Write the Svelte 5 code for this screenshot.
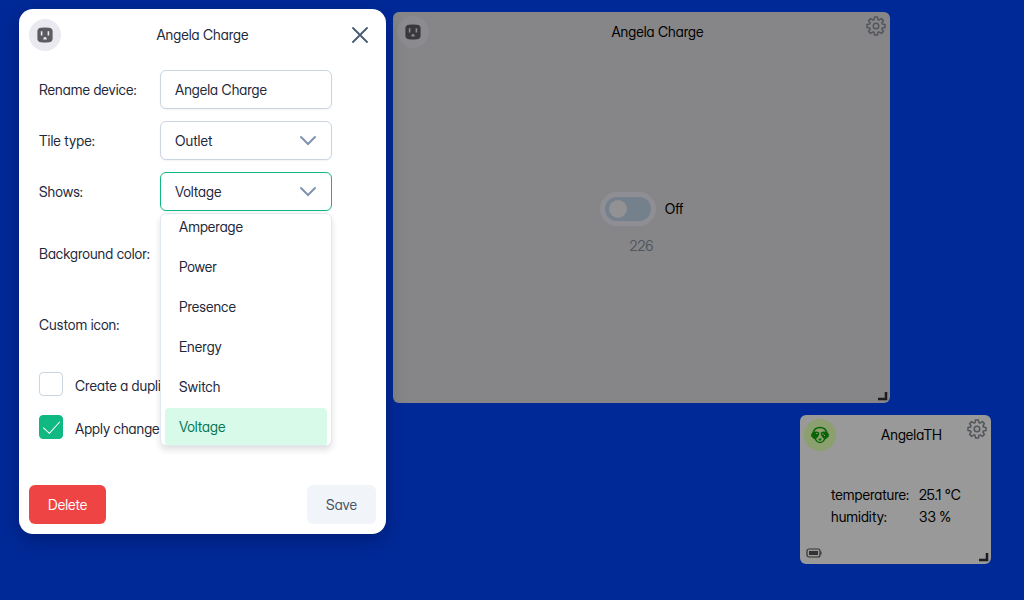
<script>
    let name = $state("Angela Charge");
    let tileType = $state("Outlet");
    let shows = $state("Voltage");
    let duplicate = $state(false);
    let applyAll = $state(true);

    const tileTypes = ["Outlet", "Switch", "Sensor"];
    const options = ["Amperage", "Power", "Presence", "Energy", "Switch", "Voltage"];
    const readings = [
        { label: "temperature:", value: "25.1 °C" },
        { label: "humidity:", value: "33 %" },
    ];
</script>

{#snippet outlet()}
    <svg width="16" height="16" viewBox="0 0 16 16" aria-hidden="true">
        <path fill="currentColor" d="M4 .8Q8 .3 12 .8Q15.4 1 15.6 4V12Q15.4 15 12 15.2Q8 15.7 4 15.2Q.6 15 .4 12V4Q.6 1 4 .8Z" />
        <path class="holes" d="M3.8 4.3h1.6v4.2H3.8zM10.6 4.3h1.6v4.2h-1.6zM6.3 12.5v-.8a1.7 1.7 0 0 1 3.4 0v.8z" />
    </svg>
{/snippet}

{#snippet gear()}
    <svg width="20" height="20" viewBox="0 0 20 20" fill="none" stroke="currentColor" stroke-width="1.5" stroke-linejoin="round" aria-hidden="true">
        <path d="M8 3.7 8.6 1h2.8l.6 2.7 1 .4 2.4-1.500 2 2-1.500 2.400.4 1 2.700.6v2.800l-2.700.6-.4 1 1.500 2.400-2 2-2.400-1.500-1 .4-.6 2.700H8.600L8 16.300l-1-.4-2.400 1.500-2-2L4.100 13l-.4-1L1 11.400V8.600L3.700 8l.4-1-1.500-2.400 2-2L7 4.100z" />
        <circle cx="10" cy="10" r="2.8" />
    </svg>
{/snippet}

{#snippet corner()}
    <svg class="corner" width="10" height="10" viewBox="0 0 10 10" aria-hidden="true">
        <path d="M8 1v7H0" fill="none" stroke="#1d1d1f" stroke-width="2.5" />
    </svg>
{/snippet}

{#snippet chevron()}
    <svg class="chevron" width="18" height="12" viewBox="0 0 18 12" aria-hidden="true">
        <path d="M2 2l7 7 7-7" fill="none" stroke="#8094ae" stroke-width="2" stroke-linecap="round" />
    </svg>
{/snippet}

<main class="dashboard">
    <section class="tile charge">
        <span class="badge">{@render outlet()}</span>
        <h2>{name}</h2>
        <button class="settings" aria-label="Settings for Angela Charge">{@render gear()}</button>
        <div class="state">
            <label class="power">
                <input type="checkbox" class="toggle" />
                <span>Off</span>
            </label>
            <span class="volts">226</span>
        </div>
        {@render corner()}
    </section>

    <section class="tile climate">
        <span class="badge green">
            <svg width="20" height="18" viewBox="0 0 20 18" aria-hidden="true">
                <path d="M3 7C4 2.500 6.500 1.500 10 1.500s6 1 7 5.500" fill="none" stroke="#076407" stroke-width="1.500" />
                <path d="M1 9Q1.500 6 5 5.500T9.500 7Q9 11 6.500 12.500T2.500 11.500Q1 11 1 9z" fill="#076407" />
                <path d="M19 9q-.5-3-4-3.500T10.500 7q.5 4 3 5.500t4-1q1.500-.5 1.500-2.500z" fill="#076407" />
                <path d="M5 12.500q2 4 5 4t5-4" fill="none" stroke="#076407" stroke-width="1.400" />
                <path d="M8.500 12.500h3L11 14.500H9z" fill="#076407" />
                <path d="M6 7.500h1.500M12 8h1.500M14 9.500h1" stroke="#8c9f6e" />
            </svg>
        </span>
        <h2>AngelaTH</h2>
        <button class="settings" aria-label="Settings for AngelaTH">{@render gear()}</button>
        <dl>
            {#each readings as item}
                <dt>{item.label}</dt>
                <dd>{item.value}</dd>
            {/each}
        </dl>
        <svg class="battery" width="16" height="10" viewBox="0 0 16 10" aria-hidden="true">
            <rect x="1" y="1" width="13" height="8" rx="2" fill="none" stroke="#333" stroke-width="1.2" />
            <path d="M3 3h9v4H3zM14.500 3.500h1v3h-1z" fill="#333" />
        </svg>
        {@render corner()}
    </section>

    <form class="dialog" onsubmit={(e) => e.preventDefault()}>
        <header>
            <span class="badge">{@render outlet()}</span>
            <h1>{name}</h1>
            <button type="button" class="close" aria-label="Close">
                <svg width="16" height="16" viewBox="0 0 16 16" aria-hidden="true">
                    <path d="M1 1l14 14M15 1L1 15" stroke="#475b73" stroke-width="1.8" stroke-linecap="round" />
                </svg>
            </button>
        </header>

        <div class="fields">
            <div class="row">
                <label for="name">Rename device:</label>
                <input id="name" class="control" type="text" bind:value={name} />
            </div>
            <div class="row">
                <label for="type">Tile type:</label>
                <div class="select">
                    <select id="type" class="control" bind:value={tileType}>
                        {#each tileTypes as type}
                            <option>{type}</option>
                        {/each}
                    </select>
                    {@render chevron()}
                </div>
            </div>
            <div class="row">
                <label for="shows">Shows:</label>
                <div class="select">
                    <select id="shows" class="control active" bind:value={shows}>
                        {#each options as option}
                            <option>{option}</option>
                        {/each}
                    </select>
                    {@render chevron()}
                    <ul class="menu">
                        {#each options as option}
                            <li>
                                <button type="button" class:selected={option === shows} onclick={() => (shows = option)}>{option}</button>
                            </li>
                        {/each}
                    </ul>
                </div>
            </div>
            <div class="row color"><span>Background color:</span></div>
            <div class="row icon"><span>Custom icon:</span></div>
            <label class="check">
                <input type="checkbox" bind:checked={duplicate} />
                <span>Create a dupli</span>
            </label>
            <label class="check">
                <input type="checkbox" bind:checked={applyAll} />
                <span>Apply changes</span>
            </label>
        </div>

        <footer>
            <button type="button" class="delete">Delete</button>
            <button type="submit" class="save">Save</button>
        </footer>
    </form>
</main>

<style>
    :global(body) {
        margin: 0;
        background: #002998;
    }

    .dashboard {
        position: relative;
        box-sizing: border-box;
        min-height: 100vh;
        padding: 9px 19px;
        background: #002998;
        color: #1e293b;
        font: 14px/20px "Inter Display", Inter, "Open Sans", sans-serif;
        font-feature-settings: "cv11";
        font-variation-settings: "opsz" 32;
    }

    * {
        box-sizing: border-box;
    }

    button,
    input,
    select {
        margin: 0;
        font: inherit;
        font-feature-settings: inherit;
        font-variation-settings: inherit;
        color: inherit;
    }

    button {
        padding: 0;
        border: 0;
        background: none;
        cursor: pointer;
    }

    svg {
        display: block;
    }

    h1,
    h2 {
        margin: 0;
        font-size: 14px;
        font-weight: 400;
    }

    .badge {
        display: flex;
        flex: none;
        align-items: center;
        justify-content: center;
        width: 32px;
        height: 32px;
        border-radius: 50%;
        background: #e9e9ef;
        color: #5b5b60;
    }

    .holes {
        fill: #e9e9ef;
    }

    /* dashboard tiles */
    .tile {
        position: absolute;
        border-radius: 6px;
        background: #999;
        color: #000;
    }

    .tile .badge {
        position: absolute;
        top: 4px;
        left: 4px;
        background: #8c8c90;
        color: #39393b;
    }

    .tile .holes {
        fill: #8c8c90;
    }

    .tile .badge.green {
        background: #8c9f6e;
    }

    .tile h2 {
        padding-top: 10px;
        padding-left: 32px;
        text-align: center;
    }

    .settings {
        position: absolute;
        top: 4px;
        right: 4px;
        color: #53565c;
    }

    .corner {
        position: absolute;
        right: 2px;
        bottom: 2px;
    }

    .tile.charge {
        top: 12px;
        left: 393px;
        width: 497px;
        height: 391px;
        background: #868688;
    }

    .climate {
        top: 415px;
        left: 800px;
        width: 191px;
        height: 149px;
    }

    .state {
        display: flex;
        flex-direction: column;
        align-items: center;
        gap: 10px;
        margin-top: 150px;
    }

    .power {
        display: flex;
        align-items: center;
        gap: 9px;
    }

    .toggle {
        appearance: none;
        width: 56px;
        height: 34px;
        padding: 5px 9px;
        border: 5px solid #8e8e94;
        border-radius: 17px;
        background: #74808c;
    }

    .toggle::before {
        content: "";
        display: block;
        width: 18px;
        height: 18px;
        margin: -2px -5px;
        border-radius: 50%;
        background: #929294;
    }

    .volts {
        color: #52565e;
    }

    dl {
        display: grid;
        grid-template-columns: 78px auto;
        column-gap: 10px;
        row-gap: 2px;
        margin: 40px 0 0 31px;
    }

    dd {
        margin: 0;
    }

    .battery {
        position: absolute;
        bottom: 6px;
        left: 6px;
    }

    /* settings dialog */
    .dialog {
        position: relative;
        width: 367px;
        padding: 10px;
        border-radius: 14px;
        background: #fff;
        box-shadow: 0 6px 20px rgba(0, 0, 40, 0.3);
    }

    header {
        display: flex;
        align-items: center;
        justify-content: space-between;
    }

    .close {
        padding: 8px;
    }

    .fields {
        display: flex;
        flex-direction: column;
        gap: 12px;
        padding: 19px 44px 0 10px;
    }

    .row {
        display: grid;
        grid-template-columns: 121px 1fr;
        align-items: center;
        min-height: 39px;
        white-space: nowrap;
    }

    .control {
        display: block;
        appearance: none;
        width: 100%;
        height: 39px;
        padding: 0 14px;
        border: 1px solid #cbd5e1;
        border-radius: 6px;
        outline: 0;
        background: #fff;
        box-shadow: 0 1px 2px rgba(18, 18, 23, 0.05);
    }

    .control.active {
        border-color: #10b981;
    }

    .select {
        position: relative;
    }

    .chevron {
        position: absolute;
        top: 14px;
        right: 15px;
        pointer-events: none;
    }

    .menu {
        position: absolute;
        z-index: 1;
        top: 41px;
        left: 0;
        width: 100%;
        height: 233px;
        margin: 0;
        padding: 0 4px;
        overflow: hidden;
        border: 1px solid #e2e8f0;
        border-radius: 6px;
        background: #fff;
        box-shadow: 0 4px 6px rgba(0, 0, 0, 0.12);
        list-style: none;
    }

    .menu li {
        padding-bottom: 2px;
    }

    .menu li:first-child {
        margin-top: -6px;
    }

    .menu button {
        display: block;
        width: 100%;
        height: 38px;
        padding: 0 14px;
        border-radius: 4px;
        text-align: left;
    }

    .menu .selected {
        background: #d8fae8;
        color: #047857;
    }

    .color {
        min-height: 62px;
    }

    .icon {
        min-height: 56px;
        margin-bottom: 3px;
    }

    .check {
        display: flex;
        align-items: center;
        gap: 12px;
        height: 31px;
        white-space: nowrap;
    }

    .check span {
        padding-top: 4px;
    }

    .check input {
        appearance: none;
        width: 24px;
        height: 24px;
        border: 1px solid #cbd5e1;
        border-radius: 4px;
        background: #fff;
    }

    .check input:checked {
        border-color: #10b981;
        background: #10b981;
    }

    .check input:checked::after {
        content: "";
        display: block;
        width: 8px;
        height: 15px;
        margin: 1px 7px;
        border: solid #fff;
        border-width: 0 1px 1px 0;
        transform: rotate(42deg);
    }

    footer {
        display: flex;
        justify-content: space-between;
        padding-top: 43px;
    }

    footer button {
        height: 39px;
        padding: 0 19px;
        border-radius: 6px;
    }

    .delete {
        background: #ef4444;
        color: #fff;
    }

    .save {
        background: #f1f5f9;
        color: #475569;
    }
</style>
